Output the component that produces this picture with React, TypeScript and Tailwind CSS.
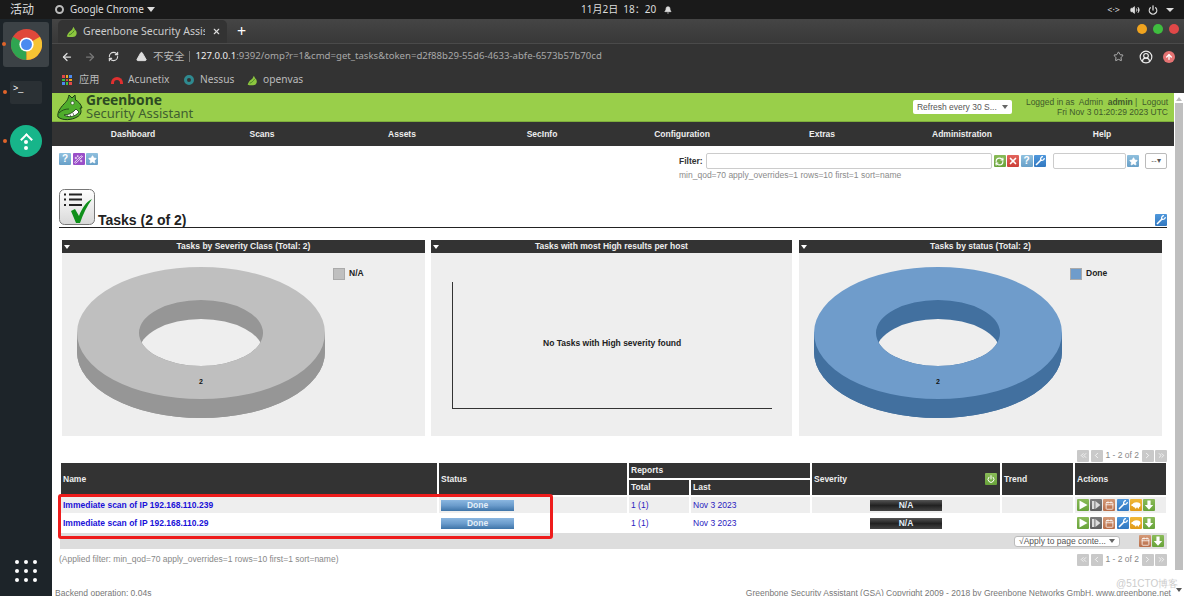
import React from "react";
import {
  ArrowDown,
  ArrowLeft,
  ArrowRight,
  Bell,
  Calendar,
  ChevronsLeft,
  ChevronsRight,
  ChevronLeft,
  ChevronRight,
  CircleUserRound,
  Power,
  RefreshCw,
  Star,
  TriangleAlert,
  Volume2,
  Wand2,
  X,
} from "lucide-react";

const UI_FONT = "font-['Noto_Sans','Noto_Sans_CJK_SC',sans-serif]";

const ChromeLogo = ({ size }: { size: number }) => (
  <svg width={size} height={size} viewBox="0 0 48 48">
    <circle cx="24" cy="24" r="24" fill="#e0483b" />
    <path d="M24 24 L3.2 12 A24 24 0 0 0 24 48 Z" fill="#2fa551" />
    <path d="M24 24 L44.8 12 A24 24 0 0 1 24 48 Z" fill="#f6c333" />
    <circle cx="24" cy="24" r="11" fill="#fff" />
    <circle cx="24" cy="24" r="8.5" fill="#4a8af0" />
  </svg>
);

const Leaf = ({ size }: { size: number }) => (
  <svg width={size} height={size} viewBox="0 0 16 16">
    <path d="M1 14 C3 8 6 7 8 5 L10 1 L12 5 C15 7 15 12 12 14 C8 15 4 15 1 14 Z" fill="#8cc63f" />
    <path d="M4 12 C7 11 9 9 11 6" stroke="#3f7a22" strokeWidth="1.2" fill="none" />
  </svg>
);

const Dragon = () => (
  <svg width="27" height="27" viewBox="0 0 27 27" className="shrink-0">
    <path
      d="M1 23 C0 19 3 14 7 10 C9 8 11 6 12 1 L15 4 L18 1 L18.5 6 C21 7 24 10 25 14 L23 14 C25 17 24 21 20 23 C15 26 6 27 1 23 Z"
      fill="#4fae2c"
      stroke="#1c3a16"
      strokeWidth="1"
    />
    <path d="M7 21 C11 21 16 19 19 15 L22 18 C18 23 12 24 7 21 Z" fill="#fff" stroke="#1c3a16" strokeWidth="0.8" />
    <path d="M10 21 L11 23 M13 20.5 L14 23 M16 19 L17 22" stroke="#1c3a16" strokeWidth="0.6" />
    <circle cx="15.5" cy="9" r="1.7" fill="#fff" stroke="#1c3a16" strokeWidth="0.6" />
    <path d="M2 19 C5 16 8 15 12 15" stroke="#1c3a16" strokeWidth="0.8" fill="none" />
  </svg>
);

const TaskIcon = () => (
  <svg width="36" height="37" viewBox="0 0 36 37" className="mb-[1px] shrink-0">
    <defs>
      <linearGradient id="taskBg" x1="0" y1="0" x2="0" y2="1">
        <stop offset="0" stopColor="#ffffff" />
        <stop offset="1" stopColor="#d8d8d8" />
      </linearGradient>
    </defs>
    <rect x="0.5" y="0.5" width="35" height="35" rx="5" fill="url(#taskBg)" stroke="#777" />
    <path d="M5 5.5h2M10 5.5h13M5 10.5h2M10 10.5h13M5 16h2M10 16h13" stroke="#222" strokeWidth="2" />
    <path d="M12 22 L16 20 L20 27 C23 19 27 13 33 10 C28 17 24 25 21 34 L17 34 Z" fill="#0f8f1a" />
  </svg>
);

const Ico = ({ bg, children }: { bg: string; children: React.ReactNode }) => (
  <span className={`flex h-[12px] w-[12px] shrink-0 items-center justify-center rounded-[1px] text-white ${bg}`}>
    {children}
  </span>
);

const WrenchGlyph = () => (
  <svg width="10" height="10" viewBox="0 0 10 10" fill="none" stroke="currentColor" strokeWidth="1.6">
    <path d="M1 9 L6.5 3.5" />
    <path d="M9.3 2 A2.4 2.4 0 0 1 5.8 4.2 M8 0.7 A2.4 2.4 0 0 0 5.8 4.2" strokeWidth="1.2" />
  </svg>
);

const PigGlyph = () => (
  <svg width="10" height="10" viewBox="0 0 10 10" fill="currentColor">
    <ellipse cx="5.5" cy="5" rx="4" ry="2.8" />
    <path d="M2.2 3.8 L0.3 4.4 L0.5 6 L2.2 6 Z" />
    <path d="M4 7 h1.2 v1.6 h-1.2 Z M6.8 7 h1.2 v1.6 h-1.2 Z" />
  </svg>
);

const ResumeGlyph = () => (
  <svg width="10" height="10" viewBox="0 0 10 10" fill="#ddd">
    <path d="M1 1 h2.4 v8 h-2.4 Z" />
    <path d="M4.4 1 L9.4 5 L4.4 9 Z" />
  </svg>
);

const PlayGlyph = () => (
  <svg width="10" height="10" viewBox="0 0 10 10" fill="currentColor">
    <path d="M1.5 0.5 L9.5 5 L1.5 9.5 Z" />
  </svg>
);

const DownGlyph = () => (
  <svg width="10" height="10" viewBox="0 0 10 10" fill="currentColor">
    <path d="M3.4 0.5 h3.2 v4.5 h2.6 L5 9.7 L0.8 5 h2.6 Z" />
  </svg>
);

const Question = () => <span className="text-[10px] font-bold leading-none">?</span>;

const GREEN = "bg-gradient-to-b from-[#8abb58] to-[#68a33a]";
const BLUE = "bg-gradient-to-b from-[#4f98dc] to-[#3278c0]";
const SKY = "bg-gradient-to-b from-[#90c0de] to-[#68a0c8]";
const RED = "bg-gradient-to-b from-[#e2645c] to-[#cc3f38]";
const GRAY = "bg-gradient-to-b from-[#7c7c7c] to-[#5f5f5f]";
const BROWN = "bg-gradient-to-b from-[#d49a78] to-[#b86d48]";
const ORANGE = "bg-gradient-to-b from-[#f0b838] to-[#e09a18]";
const PALE = "bg-[#c9c9c9]";

const ActionIcons = () => (
  <div className="flex gap-[1.2px] pl-[2px]">
    <Ico bg={GREEN}>
      <PlayGlyph />
    </Ico>
    <Ico bg={GRAY}>
      <ResumeGlyph />
    </Ico>
    <Ico bg={BROWN}>
      <Calendar size={9} />
    </Ico>
    <Ico bg={BLUE}>
      <WrenchGlyph />
    </Ico>
    <Ico bg={ORANGE}>
      <PigGlyph />
    </Ico>
    <Ico bg={GREEN}>
      <DownGlyph />
    </Ico>
  </div>
);

const Pager = () => (
  <div className="flex h-[13px] items-center gap-[1.5px] text-[8.5px] text-[#888]">
    <Ico bg={PALE}>
      <ChevronsLeft size={9} />
    </Ico>
    <Ico bg={PALE}>
      <ChevronLeft size={9} />
    </Ico>
    <span className="mx-[1px] whitespace-nowrap">1 - 2 of 2</span>
    <Ico bg={PALE}>
      <ChevronRight size={9} />
    </Ico>
    <Ico bg={PALE}>
      <ChevronsRight size={9} />
    </Ico>
  </div>
);

// 3d donut, same geometry in both outer charts
const Donut = ({ top, side, hole }: { top: string; side: string; hole: string }) => (
  <svg width="252" height="156" viewBox="0 0 252 156" className="shrink-0">
    <defs>
      <clipPath id={`h${top.slice(1)}`}>
        <ellipse cx="126" cy="67" rx="62" ry="33" />
      </clipPath>
    </defs>
    <path d="M2 67 V86 A124 66 0 0 0 250 86 V67 Z" fill={side} />
    <ellipse cx="126" cy="86" rx="124" ry="66" fill={side} />
    <ellipse cx="126" cy="67" rx="62" ry="33" fill={side} />
    <ellipse cx="126" cy="86" rx="62" ry="33" fill={hole} clipPath={`url(#h${top.slice(1)})`} />
    <path
      fillRule="evenodd"
      d="M2 67 A124 66 0 0 1 250 67 A124 66 0 0 1 2 67 Z M64 67 A62 33 0 0 0 188 67 A62 33 0 0 0 64 67 Z"
      fill={top}
    />
  </svg>
);

const ChartPanel = ({
  title,
  width,
  children,
}: {
  title: string;
  width: string;
  children: React.ReactNode;
}) => (
  <div className={`flex h-[196px] flex-col ${width}`}>
    <div className="relative flex h-[13px] items-center justify-center bg-[#333] text-[8.5px] font-bold leading-none text-[#eee]">
      <span className="absolute left-[2px] top-[5px] h-0 w-0 border-x-[3px] border-t-[4px] border-x-transparent border-t-white" />
      {title}
    </div>
    <div className="relative flex-1 bg-[#eeeeee]">{children}</div>
  </div>
);

const DonutChart = ({
  title,
  width,
  label,
  top,
  side,
  bold,
}: {
  title: string;
  width: string;
  label: string;
  top: string;
  side: string;
  bold: string;
}) => (
  <ChartPanel title={title} width={width}>
    <div className="flex pl-[13px] pt-[13px]">
      <Donut top={top} side={side} hole="#eeeeee" />
      <div className="ml-[6px] flex h-[12px] items-center gap-[4px] pt-[3px]">
        <span className={`h-[12px] w-[12px] border border-[#aaa] ${bold}`} />
        <span className="text-[8.5px] font-bold text-[#222]">{label}</span>
      </div>
    </div>
    <span className="absolute left-[137px] top-[125px] text-[7px] font-bold leading-none text-[#111]">2</span>
  </ChartPanel>
);

const Sidebar = () => (
  <div className="flex w-[52px] shrink-0 flex-col items-center bg-[#1d2429]">
    <div className="relative mt-[3px] flex h-[45px] w-[46px] items-center justify-center rounded-[3px] bg-[#3c4246]">
      <span className="absolute left-[-1px] top-[20px] h-[4px] w-[4px] rounded-full bg-[#e0642a]" />
      <ChromeLogo size={31} />
    </div>
    <div className="relative mt-[14px] h-[23px] w-[32px] rounded-[2px] bg-[#2a3034] pl-[3px] text-[9px] leading-[14px] text-white">
      <span className="absolute left-[-7px] top-[9px] h-[4px] w-[4px] rounded-full bg-[#e0642a]" />
      {">_"}
    </div>
    <div className="relative mt-[21px] flex h-[32px] w-[32px] flex-col items-center justify-center rounded-full bg-[#17b58a]">
      <span className="absolute left-[-7px] top-[14px] h-[4px] w-[4px] rounded-full bg-[#e0642a]" />
      <span className="mt-[3px] h-[9px] w-[9px] rotate-45 border-l-2 border-t-2 border-white" />
      <span className="mt-[-4px] h-[4px] w-[4px] rounded-full bg-white" />
      <span className="mt-[2px] h-[4px] w-[4px] rounded-full bg-white" />
    </div>
    <div className="mb-[14px] mt-auto grid grid-cols-3 gap-x-[5px] gap-y-[5px]">
      {Array.from({ length: 9 }).map((_, i) => (
        <span key={i} className="h-[4px] w-[4px] rounded-full bg-white" />
      ))}
    </div>
  </div>
);

const TopBar = () => (
  <div className={`relative flex h-[19px] items-center bg-[#1a1a1a] text-[10px] text-[#ddd] ${UI_FONT}`}>
    <span className="ml-[10px] w-[45px] text-[12px]">活动</span>
    <span className="mr-[6px] h-[9px] w-[9px] rounded-full border-2 border-[#bbb]" />
    <span className="w-[74px] whitespace-nowrap">Google Chrome</span>
    <span className="ml-[3px] h-0 w-0 border-x-[4px] border-t-[5px] border-x-transparent border-t-[#ddd]" />
    <span className="ml-[426px] flex items-center whitespace-nowrap">
      11月2日&nbsp;&nbsp;18：20
      <Bell size={8} fill="currentColor" className="ml-[8px]" />
    </span>
    <div className="ml-auto mr-[10px] flex items-center gap-[8px] text-[#ddd]">
      <span className="mr-[2px] text-[9px]">{"<·>"}</span>
      <Volume2 size={10} fill="currentColor" />
      <Power size={10} strokeWidth={3} />
      <span className="h-0 w-0 border-x-[4px] border-t-[4px] border-x-transparent border-t-[#ddd]" />
    </div>
  </div>
);

const ChromeBar = () => (
  <div className={`${UI_FONT} text-[#ccc]`}>
    <div className="flex h-[25px] items-end border-b border-[#4a4a4a] bg-gradient-to-b from-[#454545] to-[#383838] pl-[6px]">
      <div className="flex h-[23px] w-[169px] items-center rounded-t-[5px] bg-[#333] pl-[8px] pr-[6px] text-[10.5px]">
        <Leaf size={12} />
        <span className="ml-[5px] w-[122px] overflow-hidden whitespace-nowrap">Greenbone Security Assistant</span>
        <X size={9} className="ml-auto text-[#ddd]" strokeWidth={3} />
      </div>
      <span className="ml-[10px] self-center text-[16px] leading-none text-white">+</span>
      <div className="mb-[6px] ml-auto mr-[5px] flex items-center gap-[6px] self-center pt-[2px]">
        <span className="h-[10px] w-[10px] rounded-full bg-[#f0a41f]" />
        <span className="h-[10px] w-[10px] rounded-full bg-[#3fbd3f]" />
        <span className="h-[10px] w-[10px] rounded-full bg-[#e04848]" />
      </div>
    </div>
    <div className="flex h-[25px] items-center bg-[#333] pl-[9px]">
      <ArrowLeft size={12} strokeWidth={2.5} className="text-[#ddd]" />
      <ArrowRight size={12} strokeWidth={2.5} className="ml-[11px] text-[#777]" />
      <RefreshCw size={11} strokeWidth={2.5} className="ml-[11.5px] text-[#ddd]" />
      <TriangleAlert size={11} fill="currentColor" className="ml-[17px] text-[#ddd]" />
      <span className="ml-[6.5px] text-[10.5px] text-[#bbb]">不安全</span>
      <span className="ml-[4px] h-[11px] w-px bg-[#777]" />
      <span className="ml-[6px] whitespace-nowrap text-[9.6px]">
        <span className="text-[#eee]">127.0.0.1</span>
        <span className="text-[#a8a8a8]">:9392/omp?r=1&amp;cmd=get_tasks&amp;token=d2f88b29-55d6-4633-abfe-6573b57b70cd</span>
      </span>
      <Star size={11} className="ml-auto text-[#bbb]" />
      <CircleUserRound size={14} className="ml-[15px] text-[#eee]" />
      <span className="ml-[10px] mr-[9px] flex h-[12px] w-[12px] items-center justify-center rounded-full bg-[#e57373] text-white">
        <ArrowDown size={8} strokeWidth={4} className="rotate-180" />
      </span>
    </div>
    <div className="flex h-[24px] items-center bg-[#333] pb-[2px] pl-[10px] text-[10.2px] text-[#bbb]">
      <span className="grid h-[10px] w-[10px] grid-cols-3 gap-[1px]">
        {["bg-[#e04848]", "bg-[#f0a41f]", "bg-[#4a8af0]", "bg-[#3fbd3f]", "bg-[#e04848]", "bg-[#f0a41f]", "bg-[#4a8af0]", "bg-[#3fbd3f]", "bg-[#e04848]"].map((c, i) => (
          <span key={i} className={c} />
        ))}
      </span>
      <span className="ml-[7px] w-[21px] whitespace-nowrap">应用</span>
      <span className="ml-[11px] h-[7px] w-[12px] rounded-t-full border-[3px] border-b-0 border-[#e03030]" />
      <span className="ml-[5px] w-[43px]">Acunetix</span>
      <span className="ml-[13px] h-[10px] w-[10px] rounded-full border-[3px] border-[#2f8a90]" />
      <span className="ml-[6px] w-[34px]">Nessus</span>
      <span className="ml-[13px]">
        <Leaf size={11} />
      </span>
      <span className="ml-[5px]">openvas</span>
    </div>
  </div>
);

const GreenHeader = () => (
  <div className="flex h-[29px] items-center border-b border-[#7faf3c] bg-[#99cf4a] pl-[5px]">
    <Dragon />
    <div className={`mb-[2px] ml-[2px] flex flex-col ${UI_FONT}`}>
      <span className="text-[13.8px] font-bold leading-[13px] text-[#2c4a22]">Greenbone</span>
      <span className="text-[13px] leading-[14px] text-[#3f6030]">Security Assistant</span>
    </div>
    <div className="ml-auto mr-[14px] flex h-[14px] w-[99px] items-center justify-between whitespace-nowrap rounded-[2px] bg-white px-[4px] text-[8.5px] text-[#555]">
      Refresh every 30 S...
      <span className="h-0 w-0 border-x-[3px] border-t-[4px] border-x-transparent border-t-[#666]" />
    </div>
    <div className="mr-[6px] shrink-0 whitespace-nowrap text-right text-[8.5px] leading-[10px] text-[#3f5a2a]">
      <div>
        Logged in as&nbsp; Admin&nbsp; <b>admin</b> |&nbsp; Logout
      </div>
      <div>Fri Nov 3 01:20:29 2023 UTC</div>
    </div>
  </div>
);

const NAV = ["Scans", "Assets", "SecInfo", "Configuration", "Extras", "Administration", "Help"];

const NavBar = () => (
  <div className="flex h-[24px] items-center bg-[#333] text-[8.5px] font-bold text-[#eee]">
    <span className="w-[140px] pl-[22px] text-center">Dashboard</span>
    {NAV.map((n) => (
      <span key={n} className="w-[140px] text-center">
        {n}
      </span>
    ))}
  </div>
);

const Toolbar = () => (
  <div className="mt-[7px] flex h-[29px] pl-[7px] pr-[7px]">
    <div className="flex gap-[1.5px]">
      <Ico bg={SKY}>
        <Question />
      </Ico>
      <Ico bg="bg-[#9a4fc8]">
        <Wand2 size={9} />
      </Ico>
      <Ico bg={SKY}>
        <Star size={9} fill="currentColor" />
      </Ico>
    </div>
    <div className="ml-auto w-[488px]">
      <div className="flex h-[16px] items-center">
        <span className="w-[24px] text-[8.5px] font-bold text-[#333]">Filter:</span>
        <span className="ml-[3px] h-[16px] w-[286px] rounded-[2px] border border-[#ccc]" />
        <span className="ml-[2px] flex gap-[1.5px]">
          <Ico bg={GREEN}>
            <RefreshCw size={9} strokeWidth={3} />
          </Ico>
          <Ico bg={RED}>
            <X size={10} strokeWidth={4} />
          </Ico>
          <Ico bg={SKY}>
            <Question />
          </Ico>
          <Ico bg={BLUE}>
            <WrenchGlyph />
          </Ico>
        </span>
        <span className="ml-[6.5px] h-[16px] w-[73px] rounded-[2px] border border-[#ccc]" />
        <span className="ml-[1.5px]">
          <Ico bg={SKY}>
            <Star size={9} fill="currentColor" />
          </Ico>
        </span>
        <span className="ml-[6px] flex h-[16px] w-[22px] items-center justify-center rounded-[2px] border border-[#bbb] text-[8px] text-[#555]">
          --▾
        </span>
      </div>
      <div className="mt-[1px] whitespace-nowrap text-[8.5px] leading-[11px] text-[#8a8a8a]">
        min_qod=70 apply_overrides=1 rows=10 first=1 sort=name
      </div>
    </div>
  </div>
);

const Title = () => (
  <div className="mx-[7px] mt-[7px] flex h-[39px] items-end border-b-[1.5px] border-[#222]">
    <TaskIcon />
    <span className="mb-[-2px] ml-[3px] text-[14px] font-bold leading-[18px] text-[#222]">Tasks (2 of 2)</span>
    <span className="mb-[1px] ml-auto">
      <Ico bg={BLUE}>
        <WrenchGlyph />
      </Ico>
    </span>
  </div>
);

const Charts = () => (
  <div className="ml-[10px] mt-[12px] flex">
    <DonutChart
      title="Tasks by Severity Class (Total: 2)"
      width="w-[363px]"
      label="N/A"
      top="#bfbfbf"
      side="#969696"
      bold="bg-[#bfbfbf]"
    />
    <div className="ml-[6px]">
      <ChartPanel title="Tasks with most High results per host" width="w-[361px]">
        <div className="absolute left-[21px] top-[29px] h-[127px] w-[320px] border-b border-l border-[#333]" />
        <span className="absolute left-[112px] top-[84px] text-[8.5px] font-bold text-[#222]">
          No Tasks with High severity found
        </span>
      </ChartPanel>
    </div>
    <div className="ml-[7px]">
      <DonutChart
        title="Tasks by status (Total: 2)"
        width="w-[363px]"
        label="Done"
        top="#6f9ccb"
        side="#42709f"
        bold="bg-[#6f9ccb]"
      />
    </div>
  </div>
);

const TH = "border-2 border-white bg-[#333] px-[2px] text-left align-middle text-[8.5px] font-bold text-[#eee]";
const TD = "border-2 border-white px-[2px] text-[8.5px] leading-[10px]";

const Bar = ({ label, bg, width }: { label: string; bg: string; width: string }) => (
  <div className={`flex h-[11px] items-center justify-center text-[8.5px] font-bold text-[#e4eef8] ${width} ${bg}`}>
    {label}
  </div>
);

const Row = ({ name, stripe }: { name: string; stripe: string }) => (
  <tr className={`h-[18px] ${stripe}`}>
    <td className={`${TD} font-bold text-[#1a10d8]`}>{name}</td>
    <td className={TD}>
      <Bar label="Done" width="w-[73px]" bg="bg-gradient-to-b from-[#8ab6e0] via-[#6b9ccc] to-[#3e74a8]" />
    </td>
    <td className={`${TD} text-[#2a20c0]`}>1 (1)</td>
    <td className={`${TD} text-[#2a20c0]`}>Nov 3 2023</td>
    <td className={TD}>
      <div className="flex justify-center">
        <Bar label="N/A" width="w-[72px]" bg="bg-gradient-to-b from-[#555] via-[#222] to-[#444]" />
      </div>
    </td>
    <td className={TD} />
    <td className={`${TD} !px-0`}>
      <ActionIcons />
    </td>
  </tr>
);

const TasksTable = () => (
  <table className="ml-[7px] mt-[-1px] w-[1107px] table-fixed border-collapse">
    <colgroup>
      <col className="w-[378px]" />
      <col className="w-[190px]" />
      <col className="w-[62px]" />
      <col className="w-[121px]" />
      <col className="w-[190px]" />
      <col className="w-[73px]" />
      <col className="w-[93px]" />
    </colgroup>
    <thead>
      <tr className="h-[17px]">
        <th rowSpan={2} className={TH}>
          Name
        </th>
        <th rowSpan={2} className={TH}>
          Status
        </th>
        <th colSpan={2} className={TH}>
          Reports
        </th>
        <th rowSpan={2} className={TH}>
          <div className="flex items-center justify-between pr-[1px]">
            Severity
            <Ico bg={GREEN}>
              <Power size={8} strokeWidth={3} />
            </Ico>
          </div>
        </th>
        <th rowSpan={2} className={TH}>
          Trend
        </th>
        <th rowSpan={2} className={TH}>
          Actions
        </th>
      </tr>
      <tr className="h-[17px]">
        <th className={TH}>Total</th>
        <th className={TH}>Last</th>
      </tr>
    </thead>
    <tbody>
      <Row name="Immediate scan of IP 192.168.110.239" stripe="bg-[#eeeeee]" />
      <Row name="Immediate scan of IP 192.168.110.29" stripe="bg-white" />
      <tr className="h-[17px] bg-[#dddddd]">
        <td colSpan={7}>
          <div className="flex items-center justify-end pr-[3px]">
            <div className="flex h-[11px] w-[106px] items-center justify-between whitespace-nowrap rounded-[3px] border border-[#bbb] bg-white px-[4px] text-[8.5px] text-[#555]">
              √Apply to page conte...
              <span className="h-0 w-0 border-x-[3px] border-t-[4px] border-x-transparent border-t-[#666]" />
            </div>
            <span className="ml-[19px] flex gap-[1px]">
              <Ico bg={BROWN}>
                <Calendar size={9} />
              </Ico>
              <Ico bg={GREEN}>
                <DownGlyph />
              </Ico>
            </span>
          </div>
        </td>
      </tr>
    </tbody>
  </table>
);

const Scrollbar = () => (
  <div className="flex w-[10px] shrink-0 flex-col items-center bg-white">
    <span className="mt-[4px] h-0 w-0 border-x-[3px] border-b-[4px] border-x-transparent border-b-[#bbb]" />
    <span className="mt-[2px] h-[467px] w-[8px] bg-[#bfbfbf]" />
    <span className="mb-[4px] mt-auto h-0 w-0 border-x-[3px] border-t-[4px] border-x-transparent border-t-[#555]" />
  </div>
);

export default function App() {
  return (
    <div className="relative flex h-[596px] w-[1184px] flex-col overflow-hidden bg-white font-['Liberation_Sans',Arial,sans-serif]">
      <TopBar />
      <div className="flex min-h-0 flex-1">
        <Sidebar />
        <div className="flex min-w-0 flex-1 flex-col">
          <ChromeBar />
          <div className="flex min-h-0 flex-1">
            <div className="min-w-0 flex-1">
              <GreenHeader />
              <NavBar />
              <Toolbar />
              <Title />
              <Charts />
              <div className="mr-[7px] mt-[13px] flex justify-end">
                <Pager />
              </div>
              <TasksTable />
              <div className="mx-[7px] mt-[4px] flex h-[13px] items-center justify-between text-[8.5px] text-[#888]">
                <span>(Applied filter: min_qod=70 apply_overrides=1 rows=10 first=1 sort=name)</span>
                <Pager />
              </div>
              <div className="mx-[3px] mt-[22px] flex justify-between whitespace-nowrap text-[8.5px] leading-[11px] text-[#777]">
                <span>Backend operation: 0.04s</span>
                <span>Greenbone Security Assistant (GSA) Copyright 2009 - 2018 by Greenbone Networks GmbH, www.greenbone.net</span>
              </div>
            </div>
            <Scrollbar />
          </div>
        </div>
      </div>
      {/* red annotation drawn over the shot */}
      <div className="absolute left-[58px] top-[494px] h-[45px] w-[495px] rounded-[3px] border-[3px] border-[#ee1c1c]" />
      <span className="absolute left-[1116px] top-[579px] text-[10px] leading-[10px] text-[#ccc]">@51CTO博客</span>
    </div>
  );
}
